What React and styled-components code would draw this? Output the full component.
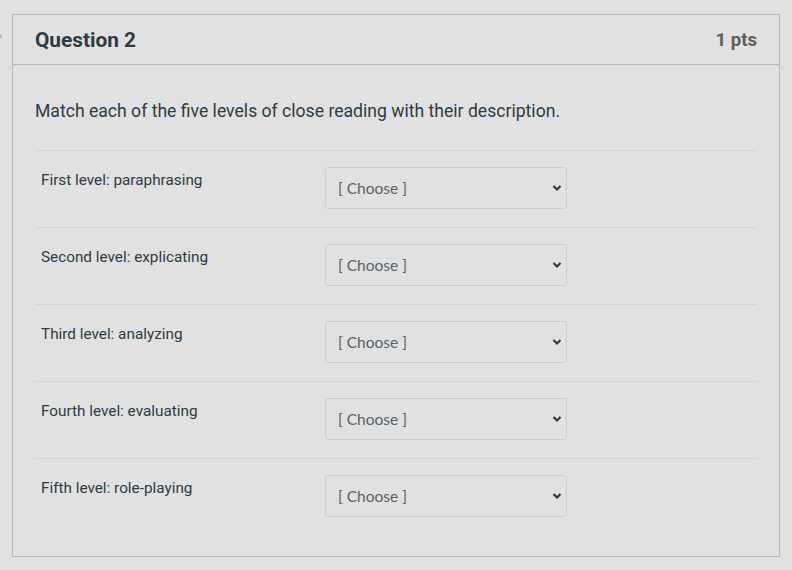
import styled, { createGlobalStyle } from 'styled-components';

const GlobalStyle = createGlobalStyle`
    html, body {
        margin: 0;
        padding: 0;
        background: #e1e1e1;
        font-family: Roboto, "Liberation Sans", sans-serif;
    }
`

const Page = styled.div`
    position: relative;
    width: 792px;
    height: 570px;
    padding: 14px 12px 0 12px;
    box-sizing: border-box;
`

const Marker = styled.div`
    position: absolute;
    left: -3px;
    top: 34px;
    width: 5px;
    height: 5px;
    border-radius: 50%;
    background: #9fc3de;
`

const Card = styled.div`
    border: 1px solid #b9b9b9;
    background: #e1e1e1;
    height: 543px;
    box-sizing: border-box;
`

const Header = styled.div`
    display: flex;
    align-items: center;
    justify-content: space-between;
    height: 49px;
    padding: 0 22px;
    border-bottom: 1px solid #b9b9b9;
    h2 {
        margin: 0;
        font-size: 20.8px;
        font-weight: 700;
        color: #2d3b45;
    }
    span {
        font-size: 18.6px;
        font-weight: 700;
        color: #5b5f62;
    }
`

const Body = styled.div`
    padding: 34px 22px 0 22px;
    p {
        margin: 0 0 27px 0;
        font-size: 17.6px;
        color: #2d3b45;
        line-height: 24px;
    }
`

const Row = styled.div`
    display: grid;
    grid-template-columns: 284px 242px;
    border-top: 1px solid #d3d3d3;
    height: 77px;
    box-sizing: border-box;
    padding: 16px 0 0 6px;
`

const Label = styled.div`
    font-size: 15.3px;
    color: #2d3b45;
    padding-top: 4px;
`

const Select = styled.div`
    display: flex;
    align-items: center;
    justify-content: space-between;
    height: 42px;
    box-sizing: border-box;
    border: 1px solid #cdcdcd;
    border-radius: 3px;
    padding: 0 4px 0 12px;
    font-family: Lato, "Liberation Sans", sans-serif;
    font-size: 15.5px;
    color: #58626b;
`

const Chevron = () => (
    <svg width="10" height="8" viewBox="0 0 10 8">
        <path d="M1.5 2 L5 5.5 L8.5 2" fill="none" stroke="#2d3b45" strokeWidth="2.2" />
    </svg>
)

const levels = [
    'First level: paraphrasing',
    'Second level: explicating',
    'Third level: analyzing',
    'Fourth level: evaluating',
    'Fifth level: role-playing',
]

const App = () => (
    <Page>
        <GlobalStyle />
        <Marker />
        <Card>
            <Header>
                <h2>Question 2</h2>
                <span>1 pts</span>
            </Header>
            <Body>
                <p>Match each of the five levels of close reading with their description.</p>
                {levels.map(level => (
                    <Row key={level}>
                        <Label>{level}</Label>
                        <Select>
                            <span>[ Choose ]</span>
                            <Chevron />
                        </Select>
                    </Row>
                ))}
            </Body>
        </Card>
    </Page>
)

export default App
